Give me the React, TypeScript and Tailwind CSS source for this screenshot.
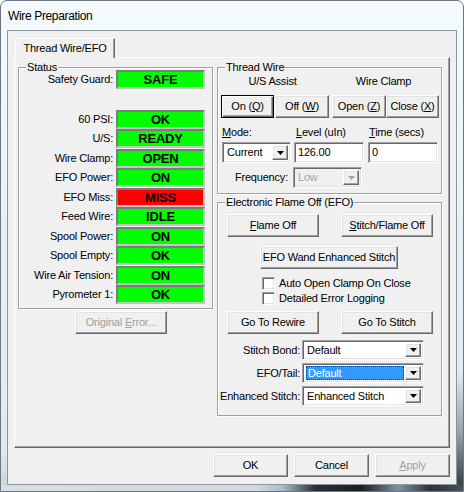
import React from "react";

const raised =
  "bg-[#f0f0f0] border border-t-white border-l-white border-r-[#696969] border-b-[#696969] shadow-[inset_-1px_-1px_0_#a0a0a0,inset_1px_1px_0_#e3e3e3]";
const defBtn =
  "bg-[#f0f0f0] border border-black shadow-[inset_1px_1px_0_#ffffff,inset_-1px_-1px_0_#696969,inset_-2px_-2px_0_#a0a0a0]";
const sunken =
  "border border-t-[#a0a0a0] border-l-[#a0a0a0] border-r-white border-b-white shadow-[inset_1px_1px_0_#696969,inset_-1px_-1px_0_#e3e3e3]";

function Btn({
  children,
  className = "",
  disabled = false,
  def = false,
}: {
  children: React.ReactNode;
  className?: string;
  disabled?: boolean;
  def?: boolean;
}) {
  return (
    <div
      className={`${def ? defBtn : raised} ${className} h-[23px] flex items-center justify-center whitespace-nowrap ${
        disabled ? "text-[#a0a0a0]" : "text-black"
      }`}
    >
      {children}
    </div>
  );
}

function Tri({ disabled = false }: { disabled?: boolean }) {
  return (
    <svg width="7" height="4" viewBox="0 0 7 4">
      <path d="M0 0H7L3.5 4Z" fill={disabled ? "#a0a0a0" : "#000"} />
    </svg>
  );
}

function Combo({
  value,
  className = "",
  disabled = false,
  selected = false,
}: {
  value: string;
  className?: string;
  disabled?: boolean;
  selected?: boolean;
}) {
  return (
    <div
      className={`${sunken} ${className} ${
        disabled ? "bg-[#f0f0f0] text-[#a0a0a0]" : "bg-white text-black"
      } flex items-stretch p-[2px]`}
    >
      <div className="flex-1 min-w-0 flex items-center">
        {selected ? (
          <div className="w-full h-full ml-[1px] mr-[1px] border border-dotted border-[#3a2a10] bg-[#3399ff] text-white flex items-center pl-[1px]">
            {value}
          </div>
        ) : (
          <span className="pl-[2px] whitespace-nowrap">{value}</span>
        )}
      </div>
      <div className={`${raised} w-[16px] flex items-center justify-center`}>
        <Tri disabled={disabled} />
      </div>
    </div>
  );
}

function TextBox({ value, className = "" }: { value: string; className?: string }) {
  return (
    <div className={`${sunken} ${className} bg-white flex items-center pl-[3px]`}>
      {value}
    </div>
  );
}

function Group({
  title,
  className = "",
  children,
}: {
  title: string;
  className?: string;
  children: React.ReactNode;
}) {
  return (
    <div
      className={`relative border border-[#a0a0a0] shadow-[inset_1px_1px_0_#ffffff,1px_1px_0_#ffffff] ${className}`}
    >
      <span className="absolute top-[-7px] left-[7px] px-[1px] bg-[#f0f0f0] leading-[13px] whitespace-nowrap">
        {title}
      </span>
      {children}
    </div>
  );
}

function CheckBox({ label }: { label: string }) {
  return (
    <div className="flex items-center h-[13px] ml-[44px]">
      <div className={`${sunken} w-[13px] h-[13px] bg-white`} />
      <span className="ml-[4px] whitespace-nowrap">{label}</span>
    </div>
  );
}

const statusRows: [string, string, boolean][] = [
  ["60 PSI:", "OK", false],
  ["U/S:", "READY", false],
  ["Wire Clamp:", "OPEN", false],
  ["EFO Power:", "ON", false],
  ["EFO Miss:", "MISS", true],
  ["Feed Wire:", "IDLE", false],
  ["Spool Power:", "ON", false],
  ["Spool Empty:", "OK", false],
  ["Wire Air Tension:", "ON", false],
  ["Pyrometer 1:", "OK", false],
];

function StatusBox({ value, red }: { value: string; red: boolean }) {
  return (
    <div
      className={`ml-[3px] w-[89px] h-[19px] border-2 border-t-[#7c7c7c] border-l-[#7c7c7c] border-r-[#c4c4c4] border-b-[#c4c4c4] ${
        red ? "bg-[#ff0000]" : "bg-[#00ff00]"
      } flex items-center justify-center font-bold text-[13px] leading-[15px] tracking-[-0.2px]`}
    >
      {value}
    </div>
  );
}

export default function App() {
  return (
    <div className="w-[464px] h-[492px] flex flex-col rounded-t-[7px] border border-[#6b7682] overflow-hidden bg-[linear-gradient(180deg,#f4fafd_0%,#eaf2f6_40%,#e1e9ee_92%,#c9d0d6_100%)] font-['Liberation_Sans',Arial,sans-serif] text-[11px] leading-[13px] text-black tracking-[-0.2px]">
      {/* Title bar */}
      <div className="h-[29px] pl-[7px] pt-[1px] flex items-center text-[12px] tracking-[-0.35px] text-black">
        Wire Preparation
      </div>

      {/* Client area row */}
      <div className="flex-1 flex min-h-0">
        <div className="w-[6px]" />
        <div className="flex-1 border border-[#8c969f] bg-[#f0f0f0] flex flex-col pl-[6px] pt-[7px]">
          {/* Tab header */}
          <div className="flex">
            <div className="ml-[1px] w-[100px] h-[20px] -mb-[1px] relative z-10 bg-[#f0f0f0] border-t border-l border-t-white border-l-white border-r border-r-[#696969] shadow-[inset_-1px_0_0_#a0a0a0] flex items-center justify-center pb-[1px]">
              Thread Wire/EFO
            </div>
          </div>
          {/* Tab page */}
          <div className="w-[436px] h-[391px] border border-t-white border-l-white border-r-[#696969] border-b-[#696969] shadow-[inset_-1px_-1px_0_#a0a0a0] flex pt-[9px] pl-[3px]">
            {/* Left column */}
            <div className="flex flex-col">
              <Group title="Status" className="w-[195px] h-[242px] pt-[2px]">
                <div className="flex items-center h-[19px]">
                  <div className="w-[94px] text-right whitespace-nowrap">Safety Guard:</div>
                  <StatusBox value="SAFE" red={false} />
                </div>
                <div className="h-[21px]" />
                {statusRows.map(([label, value, red]) => (
                  <div key={label} className="flex items-start h-[19.45px]">
                    <div className="w-[94px] h-[19px] flex items-center justify-end whitespace-nowrap">
                      {label}
                    </div>
                    <StatusBox value={value} red={red} />
                  </div>
                ))}
              </Group>
              <Btn disabled className="mt-[2px] ml-[57px] w-[92px]">
                <span>
                  Original <span className="underline">E</span>rror...
                </span>
              </Btn>
            </div>

            {/* Right column */}
            <div className="ml-[4px] flex flex-col">
              <Group title="Thread Wire" className="w-[225px] h-[127px] pt-[7px]">
                <div className="flex h-[13px]">
                  <div className="ml-[3px] w-[108px] text-center pr-[5px]">U/S Assist</div>
                  <div className="ml-[3px] w-[107px] text-center pr-[4px]">Wire Clamp</div>
                </div>
                <div className="flex mt-[7px]">
                  <Btn def className="ml-[3px] w-[53px]">
                    <span>
                      On (<span className="underline">Q</span>)
                    </span>
                  </Btn>
                  <Btn className="ml-[1px] w-[54px]">
                    <span>
                      Off (<span className="underline">W</span>)
                    </span>
                  </Btn>
                  <Btn className="ml-[3px] w-[54px]">
                    <span>
                      Open (<span className="underline">Z</span>)
                    </span>
                  </Btn>
                  <Btn className="ml-[0px] w-[53px]">
                    <span>
                      Close (<span className="underline">X</span>)
                    </span>
                  </Btn>
                </div>
                <div className="flex mt-[8px] h-[13px]">
                  <div className="ml-[4px] w-[69px]">
                    <span className="underline">M</span>ode:
                  </div>
                  <div className="ml-[3px] w-[70px] pl-[2px] whitespace-nowrap">
                    <span className="underline">L</span>evel (uIn)
                  </div>
                  <div className="ml-[4px] w-[70px] pl-[1px] whitespace-nowrap">
                    <span className="underline">T</span>ime (secs)
                  </div>
                </div>
                <div className="flex mt-[3px]">
                  <Combo value="Current" className="ml-[4px] w-[69px] h-[21px]" />
                  <TextBox value="126.00" className="ml-[3px] w-[70px] h-[21px]" />
                  <TextBox value="0" className="ml-[4px] w-[70px] h-[21px]" />
                </div>
                <div className="flex items-center mt-[4px]">
                  <div className="w-[70px] text-right">Frequency:</div>
                  <Combo value="Low" disabled className="ml-[5px] w-[69px] h-[21px]" />
                </div>
              </Group>

              <Group title="Electronic Flame Off (EFO)" className="mt-[8px] w-[225px] h-[214px] pt-[11px]">
                <div className="flex">
                  <Btn className="ml-[9px] w-[92px]">
                    <span>
                      <span className="underline">F</span>lame Off
                    </span>
                  </Btn>
                  <Btn className="ml-[22px] w-[92px]">
                    <span>
                      <span className="underline">S</span>titch/Flame Off
                    </span>
                  </Btn>
                </div>
                <Btn className="mt-[9px] ml-[42px] w-[138px]">EFO Wand Enhanced Stitch</Btn>
                <div className="mt-[8px]">
                  <CheckBox label="Auto Open Clamp On Close" />
                </div>
                <div className="mt-[2px]">
                  <CheckBox label="Detailed Error Logging" />
                </div>
                <div className="flex mt-[6px]">
                  <Btn className="ml-[9px] w-[92px]">Go To Rewire</Btn>
                  <Btn className="ml-[22px] w-[92px]">Go To Stitch</Btn>
                </div>
                <div className="flex items-center mt-[6px]">
                  <div className="w-[82px] text-right whitespace-nowrap">Stitch Bond:</div>
                  <Combo value="Default" className="ml-[2px] w-[122px] h-[20px]" />
                </div>
                <div className="flex items-center mt-[3px]">
                  <div className="w-[82px] text-right whitespace-nowrap">EFO/Tail:</div>
                  <Combo value="Default" selected className="ml-[2px] w-[122px] h-[20px]" />
                </div>
                <div className="flex items-center mt-[3px]">
                  <div className="w-[82px] text-right whitespace-nowrap">Enhanced Stitch:</div>
                  <Combo value="Enhanced Stitch" className="ml-[2px] w-[122px] h-[20px]" />
                </div>
              </Group>
            </div>
          </div>

          {/* Dialog buttons */}
          <div className="flex justify-end gap-[6px] mt-[6px] pr-[6px]">
            <Btn className="w-[75px]">OK</Btn>
            <Btn className="w-[75px]">Cancel</Btn>
            <Btn disabled className="w-[75px]">
              <span>
                <span className="underline">A</span>pply
              </span>
            </Btn>
          </div>
        </div>
        <div className="w-[6px] bg-[linear-gradient(180deg,transparent_0%,transparent_75%,#9aa5ae_88%,#3a4047_100%)]" />
      </div>

      {/* Bottom frame */}
      <div className="h-[6px] bg-[linear-gradient(90deg,#d9dee2_0%,#d3d9de_55%,#a9bccb_61%,#2a3036_68%,#1a1e22_78%,#7f93a3_86%,#2c3238_93%,#4a525a_100%)]" />
    </div>
  );
}
